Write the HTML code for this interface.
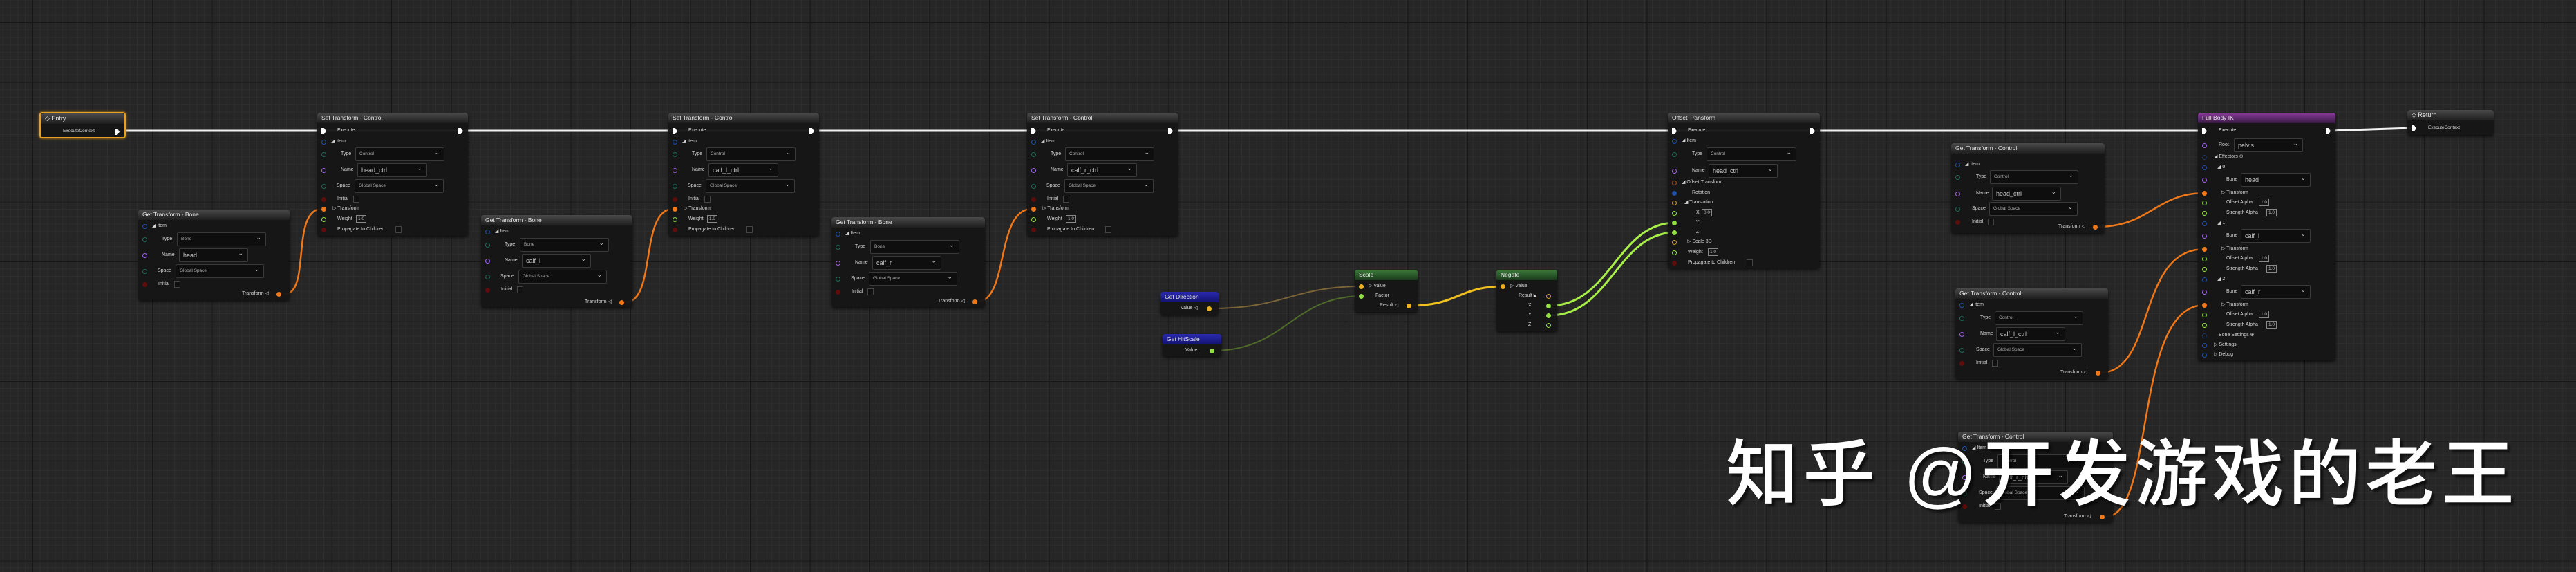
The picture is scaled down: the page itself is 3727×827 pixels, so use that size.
<!DOCTYPE html>
<html><head><meta charset="utf-8"><style>
*{margin:0;padding:0;box-sizing:border-box}
body{width:3727px;height:827px;overflow:hidden;position:relative;font-family:"Liberation Sans",sans-serif;
background-color:#262626;
background-image:linear-gradient(#171717 1px,transparent 1px),linear-gradient(90deg,#171717 1px,transparent 1px),linear-gradient(#2e2e2e 1px,transparent 1px),linear-gradient(90deg,#2e2e2e 1px,transparent 1px);
background-size:86.5px 86.5px,86.5px 86.5px,10.81px 10.81px,10.81px 10.81px;
background-position:47px 32px,47px 32px,3.8px 10.4px,3.8px 10.4px}
svg.w{position:absolute;left:0;top:0}
.n{position:absolute;background:rgba(22,22,22,.96);border-radius:4px;box-shadow:0 2px 5px rgba(0,0,0,.7);color:#d6d6d6;font-size:7px}
.h{height:15px;border-radius:4px 4px 0 0;background:linear-gradient(#4a4a4a,#1e1e1e);font-size:8.5px;line-height:15px;padding-left:6px;color:#e8e8e8}
.hb{background:linear-gradient(#2a2ab0,#121270)}
.hg{background:linear-gradient(#3c7a3c,#1a3a1a)}
.hp{background:linear-gradient(#8a3a9a,#3a1a45)}
.r{position:absolute;left:0;right:0;height:14px;line-height:14px}
.l{position:absolute;white-space:nowrap}
.p{position:absolute;left:6px;top:4px;width:7px;height:7px;border-radius:50%;border:1.6px solid}
.f{background:currentColor}
.b{color:#2150a8}.t{color:#1e6a58}.u{color:#a064e8}.d{color:#5e0c0c;background:#5e0c0c}.o{color:#f07818;background:#f07818}.g{color:#92e040}.y{color:#d0a030}.yf{color:#eeb020;background:#eeb020}.gf{color:#92e040;background:#92e040}
.x{position:absolute;left:6px;top:3px;width:7px;height:9px;background:#fff;clip-path:polygon(0 0,55% 0,100% 50%,55% 100%,0 100%)}
.xr{left:auto;right:7px}
.dd{position:absolute;top:-3px;height:20px;border:1px solid #3a3a3a;background:#0e0e0e;border-radius:2px;line-height:18px;padding-left:5px;font-size:6.5px;color:#aaa;font-weight:normal}
.dd.big{font-size:9px;color:#c8c8c8}
.dd:after{content:"⌄";position:absolute;right:6px;top:-3px;font-size:9px;color:#ccc}
.cb{position:absolute;top:2px;width:9px;height:10px;border:1px solid #444;background:#111}
.vb{position:absolute;top:1px;height:11px;border:1px solid #888;padding:0 2px;line-height:9px;font-size:6.5px;color:#bbb}
.wm{position:absolute;left:2497px;top:601px;font-family:"Liberation Sans","Noto Sans CJK SC",sans-serif;font-size:105px;font-weight:500;color:#fff;white-space:nowrap;text-shadow:4px 4px 3px rgba(0,0,0,.6);letter-spacing:6px}
</style></head><body>
<svg class="w" width="3727" height="827" fill="none">
<path d="M182 189 L3190 189 M3370 189 L3490 185" stroke="#f2f2f2" stroke-width="3"/>
<g stroke="#f07818" stroke-width="2.5">
<path d="M412 425 C450 425 420 302 466 302"/>
<path d="M905 437 C950 437 925 302 974 302"/>
<path d="M1414 436 C1460 436 1440 302 1493 302"/>
<path d="M3034 328 C3110 328 3120 279 3190 279"/>
<path d="M3038 539 C3120 539 3090 360 3190 360"/>
<path d="M3046 747 C3120 747 3085 441 3190 441"/>
</g>
<path d="M1752 446 C1860 446 1870 414 1971 414" stroke="#7a6438" stroke-width="2"/>
<path d="M1755 507 C1860 507 1870 428 1971 428" stroke="#4f6a2a" stroke-width="2"/>
<path d="M2040 442 C2110 442 2110 414 2176 414" stroke="#f0c020" stroke-width="3"/>
<path d="M2242 442 C2330 442 2340 322 2424 322" stroke="#a8f048" stroke-width="3"/>
<path d="M2242 456 C2330 456 2340 336 2424 336" stroke="#a8f048" stroke-width="3"/>
</svg>

<div class="n" style="left:57px;top:162px;width:125px;height:38px;border:2px solid #e8a020;box-shadow:0 0 4px #c08010">
<div class="h" style="font-size:9px">◇ Entry</div>
<div class="r" style="top:19px"><span class="l" style="left:32px;font-size:6.5px">ExecuteContext</span><i class="x xr"></i></div>
</div>

<div class="n" style="left:459px;top:163px;width:218px;height:178px">
<div class="h">Set Transform - Control</div>
<div class="r" style="top:19px"><i class="x"></i><span class="l" style="left:29px">Execute</span><i class="x xr"></i></div>
<div class="r" style="top:35px"><i class="p b"></i><span class="l" style="left:20px">◢ Item</span></div>
<div class="r" style="top:53px"><i class="p t"></i><span class="l" style="left:34px">Type</span><b class="dd" style="left:55px;width:129px">Control</b></div>
<div class="r" style="top:76px"><i class="p u"></i><span class="l" style="left:34px">Name</span><b class="dd big" style="left:58px;width:101px">head_ctrl</b></div>
<div class="r" style="top:99px"><i class="p t"></i><span class="l" style="left:28px">Space</span><b class="dd" style="left:54px;width:129px">Global Space</b></div>
<div class="r" style="top:118px"><i class="p d"></i><span class="l" style="left:29px">Initial</span><i class="cb" style="left:52px"></i></div>
<div class="r" style="top:132px"><i class="p o"></i><span class="l" style="left:22px">▷ Transform</span></div>
<div class="r" style="top:147px"><i class="p g"></i><span class="l" style="left:29px">Weight</span><span class="vb" style="left:56px">1.0</span></div>
<div class="r" style="top:162px"><i class="p d"></i><span class="l" style="left:29px">Propagate to Children</span><i class="cb" style="left:113px"></i></div>
</div>

<div class="n" style="left:967px;top:163px;width:218px;height:178px">
<div class="h">Set Transform - Control</div>
<div class="r" style="top:19px"><i class="x"></i><span class="l" style="left:29px">Execute</span><i class="x xr"></i></div>
<div class="r" style="top:35px"><i class="p b"></i><span class="l" style="left:20px">◢ Item</span></div>
<div class="r" style="top:53px"><i class="p t"></i><span class="l" style="left:34px">Type</span><b class="dd" style="left:55px;width:129px">Control</b></div>
<div class="r" style="top:76px"><i class="p u"></i><span class="l" style="left:34px">Name</span><b class="dd big" style="left:58px;width:101px">calf_l_ctrl</b></div>
<div class="r" style="top:99px"><i class="p t"></i><span class="l" style="left:28px">Space</span><b class="dd" style="left:54px;width:129px">Global Space</b></div>
<div class="r" style="top:118px"><i class="p d"></i><span class="l" style="left:29px">Initial</span><i class="cb" style="left:52px"></i></div>
<div class="r" style="top:132px"><i class="p o"></i><span class="l" style="left:22px">▷ Transform</span></div>
<div class="r" style="top:147px"><i class="p g"></i><span class="l" style="left:29px">Weight</span><span class="vb" style="left:56px">1.0</span></div>
<div class="r" style="top:162px"><i class="p d"></i><span class="l" style="left:29px">Propagate to Children</span><i class="cb" style="left:113px"></i></div>
</div>

<div class="n" style="left:1486px;top:163px;width:218px;height:178px">
<div class="h">Set Transform - Control</div>
<div class="r" style="top:19px"><i class="x"></i><span class="l" style="left:29px">Execute</span><i class="x xr"></i></div>
<div class="r" style="top:35px"><i class="p b"></i><span class="l" style="left:20px">◢ Item</span></div>
<div class="r" style="top:53px"><i class="p t"></i><span class="l" style="left:34px">Type</span><b class="dd" style="left:55px;width:129px">Control</b></div>
<div class="r" style="top:76px"><i class="p u"></i><span class="l" style="left:34px">Name</span><b class="dd big" style="left:58px;width:101px">calf_r_ctrl</b></div>
<div class="r" style="top:99px"><i class="p t"></i><span class="l" style="left:28px">Space</span><b class="dd" style="left:54px;width:129px">Global Space</b></div>
<div class="r" style="top:118px"><i class="p d"></i><span class="l" style="left:29px">Initial</span><i class="cb" style="left:52px"></i></div>
<div class="r" style="top:132px"><i class="p o"></i><span class="l" style="left:22px">▷ Transform</span></div>
<div class="r" style="top:147px"><i class="p g"></i><span class="l" style="left:29px">Weight</span><span class="vb" style="left:56px">1.0</span></div>
<div class="r" style="top:162px"><i class="p d"></i><span class="l" style="left:29px">Propagate to Children</span><i class="cb" style="left:113px"></i></div>
</div>

<div class="n" style="left:200px;top:303px;width:219px;height:131px">
<div class="h">Get Transform - Bone</div>
<div class="r" style="top:17px"><i class="p b"></i><span class="l" style="left:20px">◢ Item</span></div>
<div class="r" style="top:36px"><i class="p t"></i><span class="l" style="left:34px">Type</span><b class="dd" style="left:56px;width:129px">Bone</b></div>
<div class="r" style="top:59px"><i class="p u"></i><span class="l" style="left:34px">Name</span><b class="dd big" style="left:59px;width:100px">head</b></div>
<div class="r" style="top:82px"><i class="p t"></i><span class="l" style="left:28px">Space</span><b class="dd" style="left:54px;width:128px">Global Space</b></div>
<div class="r" style="top:101px"><i class="p d"></i><span class="l" style="left:29px">Initial</span><i class="cb" style="left:52px"></i></div>
<div class="r" style="top:115px"><span class="l" style="left:150px">Transform ◁</span><i class="p o" style="left:200px"></i></div>
</div>

<div class="n" style="left:696px;top:311px;width:219px;height:133px">
<div class="h">Get Transform - Bone</div>
<div class="r" style="top:17px"><i class="p b"></i><span class="l" style="left:20px">◢ Item</span></div>
<div class="r" style="top:36px"><i class="p t"></i><span class="l" style="left:34px">Type</span><b class="dd" style="left:56px;width:129px">Bone</b></div>
<div class="r" style="top:59px"><i class="p u"></i><span class="l" style="left:34px">Name</span><b class="dd big" style="left:59px;width:100px">calf_l</b></div>
<div class="r" style="top:82px"><i class="p t"></i><span class="l" style="left:28px">Space</span><b class="dd" style="left:54px;width:128px">Global Space</b></div>
<div class="r" style="top:101px"><i class="p d"></i><span class="l" style="left:29px">Initial</span><i class="cb" style="left:52px"></i></div>
<div class="r" style="top:119px"><span class="l" style="left:150px">Transform ◁</span><i class="p o" style="left:200px"></i></div>
</div>

<div class="n" style="left:1203px;top:314px;width:222px;height:130px">
<div class="h">Get Transform - Bone</div>
<div class="r" style="top:17px"><i class="p b"></i><span class="l" style="left:20px">◢ Item</span></div>
<div class="r" style="top:36px"><i class="p t"></i><span class="l" style="left:34px">Type</span><b class="dd" style="left:56px;width:129px">Bone</b></div>
<div class="r" style="top:59px"><i class="p u"></i><span class="l" style="left:34px">Name</span><b class="dd big" style="left:59px;width:100px">calf_r</b></div>
<div class="r" style="top:82px"><i class="p t"></i><span class="l" style="left:28px">Space</span><b class="dd" style="left:54px;width:128px">Global Space</b></div>
<div class="r" style="top:101px"><i class="p d"></i><span class="l" style="left:29px">Initial</span><i class="cb" style="left:52px"></i></div>
<div class="r" style="top:115px"><span class="l" style="left:154px">Transform ◁</span><i class="p o" style="left:204px"></i></div>
</div>

<div class="n" style="left:1679px;top:422px;width:84px;height:33px">
<div class="h hb">Get Direction</div>
<div class="r" style="top:17px"><span class="l" style="left:29px">Value ◁</span><i class="p yf" style="left:67px"></i></div>
</div>
<div class="n" style="left:1682px;top:483px;width:85px;height:32px">
<div class="h hb">Get HitScale</div>
<div class="r" style="top:17px"><span class="l" style="left:33px">Value</span><i class="p gf" style="left:68px"></i></div>
</div>

<div class="n" style="left:1960px;top:390px;width:91px;height:61px">
<div class="h hg">Scale</div>
<div class="r" style="top:17px"><i class="p yf"></i><span class="l" style="left:20px">▷ Value</span></div>
<div class="r" style="top:31px"><i class="p gf"></i><span class="l" style="left:30px">Factor</span></div>
<div class="r" style="top:45px"><span class="l" style="left:36px">Result ◁</span><i class="p yf" style="left:75px"></i></div>
</div>
<div class="n" style="left:2165px;top:390px;width:88px;height:89px">
<div class="h hg">Negate</div>
<div class="r" style="top:17px"><i class="p yf"></i><span class="l" style="left:20px">▷ Value</span></div>
<div class="r" style="top:31px"><span class="l" style="left:32px">Result ◣</span><i class="p y" style="left:72px"></i></div>
<div class="r" style="top:45px"><span class="l" style="left:46px">X</span><i class="p gf" style="left:72px"></i></div>
<div class="r" style="top:59px"><span class="l" style="left:46px">Y</span><i class="p gf" style="left:72px"></i></div>
<div class="r" style="top:73px"><span class="l" style="left:46px">Z</span><i class="p g" style="left:72px"></i></div>
</div>

<div class="n" style="left:2413px;top:163px;width:220px;height:225px">
<div class="h">Offset Transform</div>
<div class="r" style="top:19px"><i class="x"></i><span class="l" style="left:29px">Execute</span><i class="x xr"></i></div>
<div class="r" style="top:34px"><i class="p b"></i><span class="l" style="left:20px">◢ Item</span></div>
<div class="r" style="top:53px"><i class="p t"></i><span class="l" style="left:35px">Type</span><b class="dd" style="left:56px;width:130px">Control</b></div>
<div class="r" style="top:77px"><i class="p u"></i><span class="l" style="left:35px">Name</span><b class="dd big" style="left:59px;width:100px">head_ctrl</b></div>
<div class="r" style="top:94px"><i class="p" style="color:#b0501a"></i><span class="l" style="left:20px">◢ Offset Transform</span></div>
<div class="r" style="top:109px"><i class="p b f"></i><span class="l" style="left:35px">Rotation</span></div>
<div class="r" style="top:123px"><i class="p y"></i><span class="l" style="left:24px">◢ Translation</span></div>
<div class="r" style="top:138px"><i class="p g"></i><span class="l" style="left:41px">X</span><span class="vb" style="left:49px">0.0</span></div>
<div class="r" style="top:152px"><i class="p gf"></i><span class="l" style="left:41px">Y</span></div>
<div class="r" style="top:166px"><i class="p gf"></i><span class="l" style="left:41px">Z</span></div>
<div class="r" style="top:180px"><i class="p y"></i><span class="l" style="left:28px">▷ Scale 3D</span></div>
<div class="r" style="top:195px"><i class="p g"></i><span class="l" style="left:29px">Weight</span><span class="vb" style="left:58px">1.0</span></div>
<div class="r" style="top:210px"><i class="p d"></i><span class="l" style="left:29px">Propagate to Children</span><i class="cb" style="left:114px"></i></div>
</div>

<div class="n" style="left:2823px;top:207px;width:222px;height:130px">
<div class="h">Get Transform - Control</div>
<div class="r" style="top:24px"><i class="p b"></i><span class="l" style="left:20px">◢ Item</span></div>
<div class="r" style="top:42px"><i class="p t"></i><span class="l" style="left:36px">Type</span><b class="dd" style="left:56px;width:128px">Control</b></div>
<div class="r" style="top:66px"><i class="p u"></i><span class="l" style="left:36px">Name</span><b class="dd big" style="left:59px;width:100px">head_ctrl</b></div>
<div class="r" style="top:88px"><i class="p t"></i><span class="l" style="left:30px">Space</span><b class="dd" style="left:55px;width:128px">Global Space</b></div>
<div class="r" style="top:107px"><i class="p d"></i><span class="l" style="left:30px">Initial</span><i class="cb" style="left:53px"></i></div>
<div class="r" style="top:114px"><span class="l" style="left:155px">Transform ◁</span><i class="p o" style="left:205px"></i></div>
</div>

<div class="n" style="left:2829px;top:417px;width:221px;height:131px">
<div class="h">Get Transform - Control</div>
<div class="r" style="top:17px"><i class="p b"></i><span class="l" style="left:20px">◢ Item</span></div>
<div class="r" style="top:36px"><i class="p t"></i><span class="l" style="left:36px">Type</span><b class="dd" style="left:57px;width:128px">Control</b></div>
<div class="r" style="top:59px"><i class="p u"></i><span class="l" style="left:36px">Name</span><b class="dd big" style="left:59px;width:100px">calf_l_ctrl</b></div>
<div class="r" style="top:82px"><i class="p t"></i><span class="l" style="left:30px">Space</span><b class="dd" style="left:55px;width:128px">Global Space</b></div>
<div class="r" style="top:101px"><i class="p d"></i><span class="l" style="left:30px">Initial</span><i class="cb" style="left:53px"></i></div>
<div class="r" style="top:115px"><span class="l" style="left:152px">Transform ◁</span><i class="p o" style="left:203px"></i></div>
</div>

<div class="n" style="left:2833px;top:624px;width:224px;height:131px">
<div class="h">Get Transform - Control</div>
<div class="r" style="top:17px"><i class="p b"></i><span class="l" style="left:20px">◢ Item</span></div>
<div class="r" style="top:36px"><i class="p t"></i><span class="l" style="left:36px">Type</span><b class="dd" style="left:57px;width:128px">Control</b></div>
<div class="r" style="top:59px"><i class="p u"></i><span class="l" style="left:36px">Name</span><b class="dd big" style="left:59px;width:100px">calf_r_ctrl</b></div>
<div class="r" style="top:82px"><i class="p t"></i><span class="l" style="left:30px">Space</span><b class="dd" style="left:55px;width:128px">Global Space</b></div>
<div class="r" style="top:101px"><i class="p d"></i><span class="l" style="left:30px">Initial</span><i class="cb" style="left:53px"></i></div>
<div class="r" style="top:116px"><span class="l" style="left:153px">Transform ◁</span><i class="p o" style="left:205px"></i></div>
</div>

<div class="n" style="left:3180px;top:163px;width:199px;height:358px">
<div class="h hp">Full Body IK</div>
<div class="r" style="top:19px"><i class="x"></i><span class="l" style="left:30px">Execute</span><i class="x xr"></i></div>
<div class="r" style="top:40px"><i class="p u"></i><span class="l" style="left:30px">Root</span><b class="dd big" style="left:52px;width:100px">pelvis</b></div>
<div class="r" style="top:57px"><i class="p b" style="border-style:dotted"></i><span class="l" style="left:23px">◢ Effectors ⊕</span></div>
<div class="r" style="top:72px"><i class="p b"></i><span class="l" style="left:28px">◢ 0</span></div>
<div class="r" style="top:90px"><i class="p u"></i><span class="l" style="left:41px">Bone</span><b class="dd big" style="left:62px;width:101px">head</b></div>
<div class="r" style="top:109px"><i class="p o"></i><span class="l" style="left:34px">▷ Transform</span></div>
<div class="r" style="top:123px"><i class="p g"></i><span class="l" style="left:41px">Offset Alpha</span><span class="vb" style="left:88px">1.0</span></div>
<div class="r" style="top:138px"><i class="p g"></i><span class="l" style="left:41px">Strength Alpha</span><span class="vb" style="left:99px">1.0</span></div>
<div class="r" style="top:153px"><i class="p b"></i><span class="l" style="left:28px">◢ 1</span></div>
<div class="r" style="top:171px"><i class="p u"></i><span class="l" style="left:41px">Bone</span><b class="dd big" style="left:62px;width:101px">calf_l</b></div>
<div class="r" style="top:190px"><i class="p o"></i><span class="l" style="left:34px">▷ Transform</span></div>
<div class="r" style="top:204px"><i class="p g"></i><span class="l" style="left:41px">Offset Alpha</span><span class="vb" style="left:88px">1.0</span></div>
<div class="r" style="top:219px"><i class="p g"></i><span class="l" style="left:41px">Strength Alpha</span><span class="vb" style="left:99px">1.0</span></div>
<div class="r" style="top:234px"><i class="p b"></i><span class="l" style="left:28px">◢ 2</span></div>
<div class="r" style="top:252px"><i class="p u"></i><span class="l" style="left:41px">Bone</span><b class="dd big" style="left:62px;width:101px">calf_r</b></div>
<div class="r" style="top:271px"><i class="p o"></i><span class="l" style="left:34px">▷ Transform</span></div>
<div class="r" style="top:285px"><i class="p g"></i><span class="l" style="left:41px">Offset Alpha</span><span class="vb" style="left:88px">1.0</span></div>
<div class="r" style="top:300px"><i class="p g"></i><span class="l" style="left:41px">Strength Alpha</span><span class="vb" style="left:99px">1.0</span></div>
<div class="r" style="top:315px"><i class="p b" style="border-style:dotted"></i><span class="l" style="left:30px">Bone Settings ⊕</span></div>
<div class="r" style="top:329px"><i class="p b"></i><span class="l" style="left:23px">▷ Settings</span></div>
<div class="r" style="top:343px"><i class="p b"></i><span class="l" style="left:23px">▷ Debug</span></div>
</div>

<div class="n" style="left:3483px;top:159px;width:125px;height:36px">
<div class="h" style="font-size:9px">◇ Return</div>
<div class="r" style="top:19px"><i class="x"></i><span class="l" style="left:30px;font-size:6.5px">ExecuteContext</span></div>
</div>

<div class="wm">知乎 @开发游戏的老王</div>
</body></html>
